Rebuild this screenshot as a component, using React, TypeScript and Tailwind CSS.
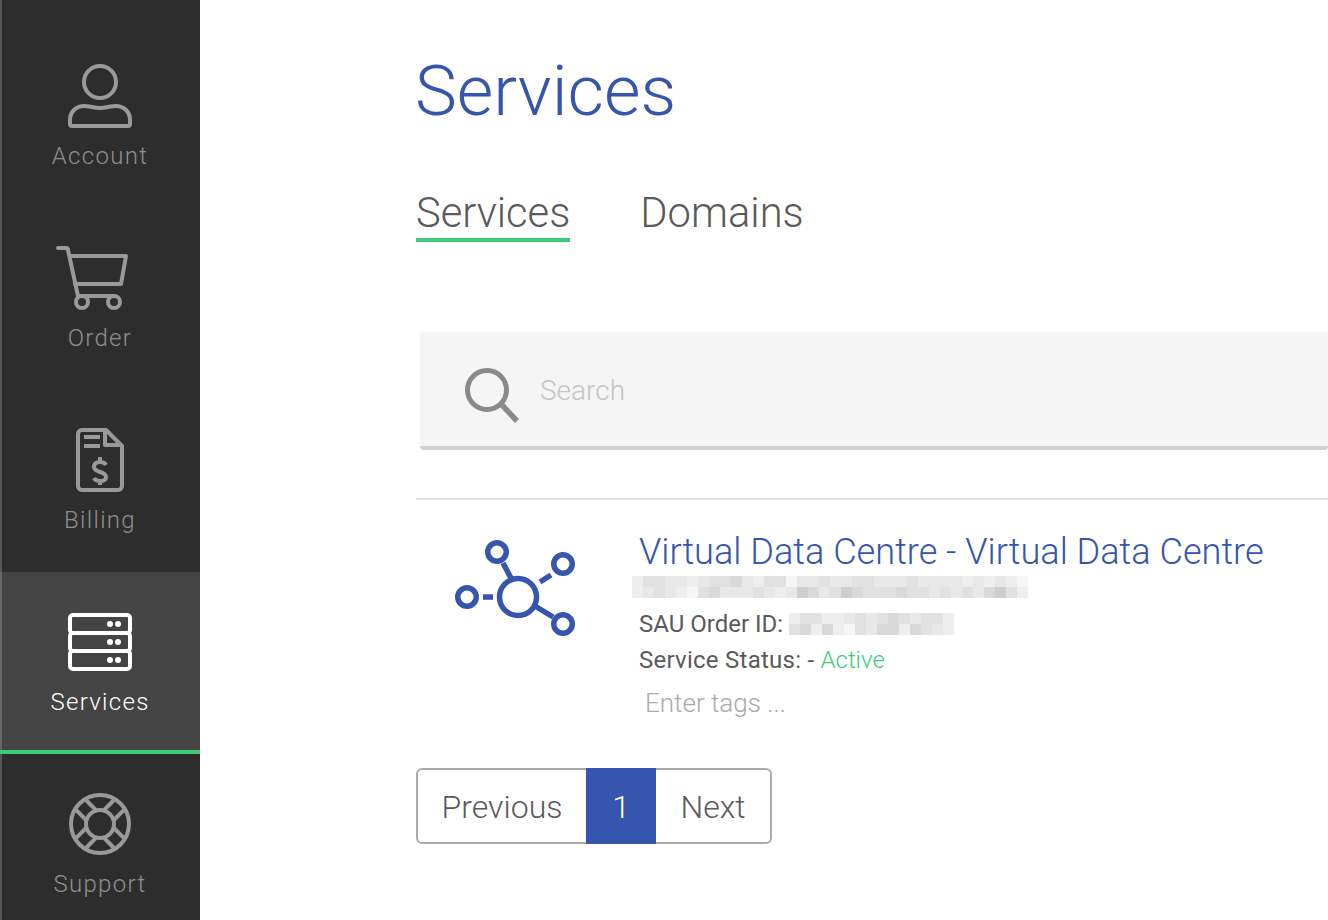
import type { ReactNode } from 'react';

const TONES: Record<string, string> = {
  a: 'bg-[#f6f6f6]',
  b: 'bg-[#eeeeee]',
  c: 'bg-[#e8e8e8]',
  d: 'bg-[#e1e1e1]',
  e: 'bg-[#d9d9d9]',
  f: 'bg-[#cecece]',
};

function Mosaic({ rows }: { rows: string[] }) {
  return (
    <div className="flex flex-col blur-[0.6px]">
      {rows.map((row, i) => (
        <div key={i} className="flex">
          {row.split('').map((tone, j) => (
            <span key={j} className={`h-[11px] w-[11px] ${TONES[tone]}`} />
          ))}
        </div>
      ))}
    </div>
  );
}

function AccountIcon() {
  return (
    <svg width="64" height="64" viewBox="0 0 64 64" fill="none" stroke="currentColor" strokeWidth="4" aria-hidden="true">
      <circle cx="32" cy="18" r="16" />
      <path d="M4 62h56a2 2 0 0 0 2-2v-4c0-8-6-14-14-14-6 0-10 2-16 2s-10-2-16-2c-8 0-14 6-14 14v4a2 2 0 0 0 2 2z" strokeLinejoin="round" />
    </svg>
  );
}

function OrderIcon() {
  return (
    <svg width="72" height="64" viewBox="0 0 72 64" fill="none" stroke="currentColor" strokeWidth="4" strokeLinecap="round" strokeLinejoin="round" className="mr-[16px]" aria-hidden="true">
      <path d="M2 2h8a2 2 0 0 1 2 2l10 46h36" />
      <path d="M14 10h56l-5 28H19" />
      <circle cx="26" cy="56" r="6" />
      <circle cx="58" cy="56" r="6" />
    </svg>
  );
}

function BillingIcon() {
  return (
    <svg width="48" height="64" viewBox="0 0 48 64" fill="none" stroke="currentColor" strokeWidth="4" strokeLinejoin="round" aria-hidden="true">
      <path d="M30 2H6a4 4 0 0 0-4 4v52a4 4 0 0 0 4 4h36a4 4 0 0 0 4-4V18z" />
      <path d="M29 2v15h17M8 9h16M8 18h16" />
      <path d="M30 37c-1-2-3-3-6-3-4 0-6 2-6 5s3 4 6 5 6 2 6 5-3 4-6 4-5-1-6-3M24 29v5M24 53v4" />
    </svg>
  );
}

function ServicesIcon() {
  return (
    <svg width="64" height="58" viewBox="0 0 64 58" fill="none" aria-hidden="true">
      {[2, 20, 38].map((y) => (
        <g key={y}>
          <rect x="2" y={y} width="60" height="18" rx="3" stroke="currentColor" strokeWidth="4" />
          <circle cx="42" cy={y + 9} r="3" fill="currentColor" />
          <circle cx="50" cy={y + 9} r="3" fill="currentColor" />
        </g>
      ))}
    </svg>
  );
}

function SupportIcon() {
  return (
    <svg width="64" height="64" viewBox="0 0 64 64" fill="none" stroke="currentColor" strokeWidth="4" aria-hidden="true">
      <circle cx="32" cy="32" r="29" />
      <circle cx="32" cy="32" r="14" />
      {[45, 135, 225, 315].map((angle) => (
        <g key={angle} transform={`rotate(${angle} 32 32)`}>
          <path d="M25 4v15M39 4v15" />
        </g>
      ))}
    </svg>
  );
}

const NAV: { label: string; icon: ReactNode; active?: boolean }[] = [
  { label: 'Account', icon: <AccountIcon /> },
  { label: 'Order', icon: <OrderIcon /> },
  { label: 'Billing', icon: <BillingIcon /> },
  { label: 'Services', icon: <ServicesIcon />, active: true },
  { label: 'Support', icon: <SupportIcon /> },
];

function Sidebar() {
  return (
    <nav className="w-[200px] shrink-0 bg-[#2d2d2d] pt-[26px] shadow-[inset_2px_0_0_#555555]">
      {NAV.map((item) => (
        <a
          key={item.label}
          className={`flex h-[182px] flex-col items-center pt-[38px] ${
            item.active
              ? 'bg-[#444444] text-white shadow-[inset_0_-4px_0_#3ec97a,inset_2px_0_0_#666666]'
              : 'text-[#999999]'
          }`}
        >
          <span className="flex h-[64px] items-center justify-center">{item.icon}</span>
          <span className={`mt-[12px] text-[24px] font-light leading-[32px] tracking-[1.3px] ${item.active ? '' : 'text-[#8f8f8f]'}`}>
            {item.label}
          </span>
        </a>
      ))}
    </nav>
  );
}

function NetworkIcon() {
  return (
    <svg width="120" height="96" viewBox="455 540 120 96" fill="none" stroke="#3555ae" strokeWidth="5.5" aria-hidden="true">
      <circle cx="518" cy="597" r="18.5" />
      <circle cx="497" cy="552" r="9.25" />
      <circle cx="563" cy="564" r="9.25" />
      <circle cx="563" cy="624" r="9.25" />
      <circle cx="467" cy="597" r="9.25" />
      <path d="M503 563l9 17M540 582l11-7M535 606l18 11M483 597h10" />
    </svg>
  );
}

function SearchIcon() {
  return (
    <svg width="56" height="56" viewBox="464 368 56 56" fill="none" stroke="#8a8a8a" strokeWidth="5" className="mt-[14px]" aria-hidden="true">
      <circle cx="487" cy="390" r="19.5" />
      <path d="M502 405l15 16" strokeWidth="5.5" />
    </svg>
  );
}

export default function App() {
  return (
    <div className="flex h-[920px] w-[1328px] overflow-hidden bg-white font-['Roboto',sans-serif] text-[#5a5a5a]">
      <Sidebar />
      <main className="min-w-0 flex-1 pl-[216px]">
        <h1 className="-ml-[1px] mt-[49px] h-[84px] text-[70.6px] font-light leading-[84px] text-[#3555ae]">Services</h1>

        <div className="mt-[47px] flex h-[62px] gap-[70px] text-[41.7px] font-light leading-[66px]">
          <a className="border-b-4 border-[#3ec97a]">Services</a>
          <a>Domains</a>
        </div>

        <div className="ml-[4px] mt-[90px] flex h-[118px] items-center rounded-[4px] border-b-4 border-[#d0d0d0] bg-[#f5f5f5] pl-[44px]">
          <SearchIcon />
          <span className="ml-[20px] mt-[4px] text-[28px] font-light text-[#c4c4c4]">Search</span>
        </div>

        <div className="mt-[48px] h-[2px] bg-[#e2e2e2]" />

        <div className="flex">
          <div className="ml-[39px] mt-[40px] w-[184px] shrink-0">
            <NetworkIcon />
          </div>
          <div className="flex min-w-0 flex-col">
            <a className="mt-[28px] whitespace-nowrap text-[36.15px] font-light leading-[48px] text-[#3555ae]">
              Virtual Data Centre - Virtual Data Centre
            </a>
            <div className="-ml-[7px] h-[22px]">
              <Mosaic rows={['bddccbcddecbddaccdccddcccdccccbcbcba', 'bcdcbadecccdcbcfecdfedddeddcdcdcefdb']} />
            </div>
            <div className="mt-[10px] flex h-[32px] items-center text-[24px] leading-[32px]">
              <span>SAU Order ID:</span>
              <div className="ml-[6px]">
                <Mosaic rows={['bddbbcdcdedcddb', 'debebadceebedcb']} />
              </div>
            </div>
            <p className="mt-[4px] h-[32px] text-[24px] leading-[32px] tracking-[0.25px]">
              Service Status: - <span className="font-light tracking-normal text-[#3ec97a]">Active</span>
            </p>
            <p className="ml-[6px] mt-[11px] text-[26px] font-light leading-[32px] text-[#aaaaaa]">Enter tags ...</p>
          </div>
        </div>

        <div className="mt-[49px] flex h-[76px] w-[356px] rounded-[6px] border-2 border-[#aaaaaa] text-[32px] font-light">
          <a className="flex w-[168px] items-center justify-center pt-[2px]">Previous</a>
          <a className="-my-[2px] flex w-[70px] items-center justify-center bg-[#3555ae] pt-[2px] text-white">1</a>
          <a className="flex flex-1 items-center justify-center pt-[2px]">Next</a>
        </div>
      </main>
    </div>
  );
}
